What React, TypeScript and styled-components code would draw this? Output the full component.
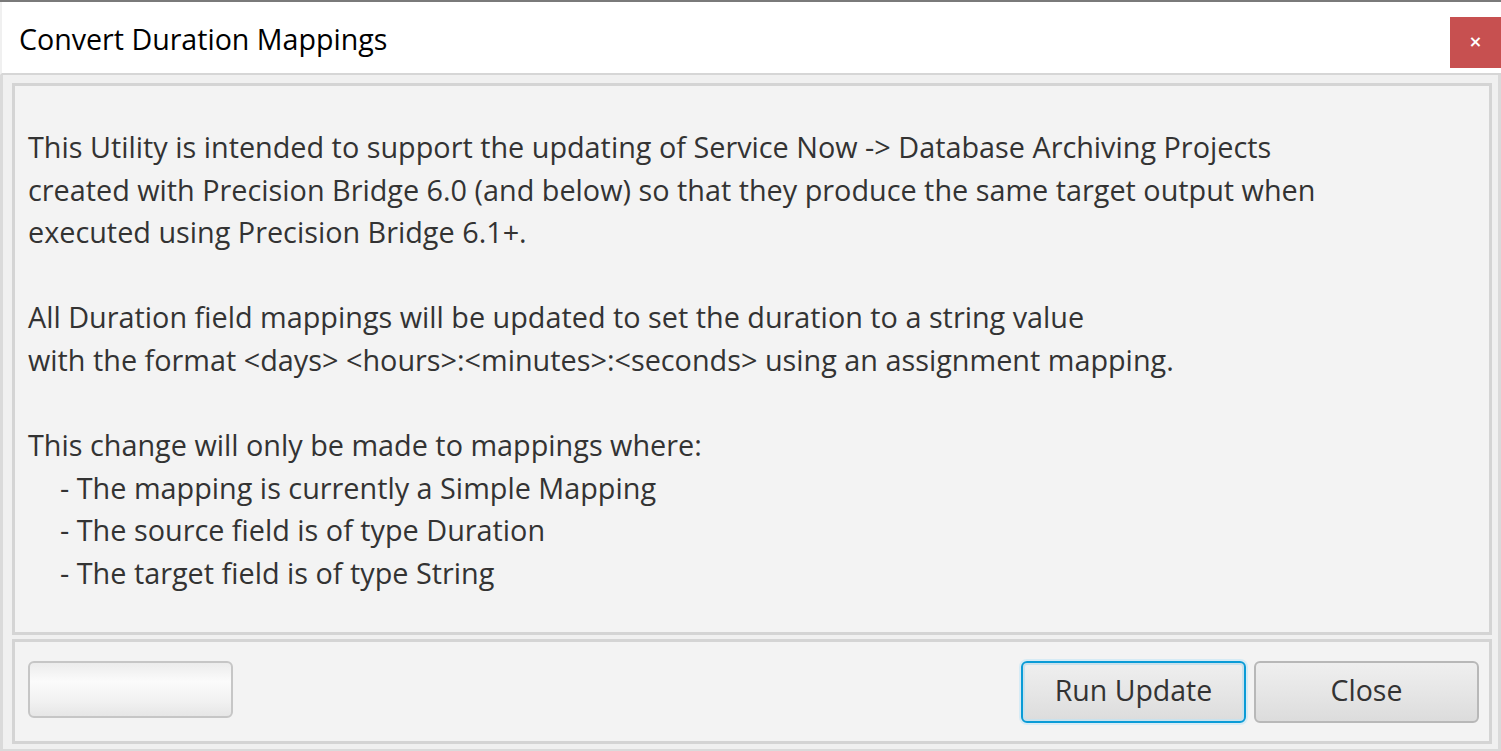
import React from "react";
import styled, { createGlobalStyle } from "styled-components";

const Global = createGlobalStyle`
  html, body { margin: 0; padding: 0; background: #f0f0f0; }
  * { box-sizing: border-box; }
`;

const FONT = `"Open Sans", "Noto Sans", sans-serif`;

const Window = styled.div`
  width: 1501px;
  height: 751px;
  display: flex;
  flex-direction: column;
  border-top: 2px solid #7a7a7a;
  font-family: ${FONT};
  overflow: hidden;
`;

const TitleBar = styled.div`
  height: 73px;
  flex: none;
  background: #ffffff;
  border-bottom: 2px solid #d6d6d6;
  border-left: 2px solid #f0f0f0;
  display: flex;
  justify-content: space-between;
  align-items: flex-start;
`;

const Title = styled.div`
  padding-left: 17px;
  height: 71px;
  display: flex;
  align-items: center;
  font-size: 28.6px;
  color: #000;
  padding-top: 2px;
`;

const CloseX = styled.button`
  margin-top: 15px;
  width: 51px;
  height: 51px;
  border: none;
  background: #c75050;
  color: #fff;
  font-family: "DejaVu Sans", sans-serif;
  font-size: 16px;
  font-weight: bold;
  padding: 0 0 2px 0;
  display: flex;
  align-items: center;
  justify-content: center;
`;

const Body = styled.div`
  flex: 1;
  display: flex;
  flex-direction: column;
  gap: 4px;
  background: #f0f0f0;
  border-left: 3px solid #dadada;
  border-right: 3px solid #dadada;
  border-bottom: 2px solid #dadada;
  padding: 8px 6px 5px 9px;
`;

const Panel = styled.div`
  flex: 1;
  border: 3px solid #d4d4d4;
  background: #f3f3f3;
  padding: 40px 13px 0 13px;
  color: #333333;
  font-size: 28.8px;
  line-height: 42.6px;
`;

const Line = styled.div<{ $indent?: boolean }>`
  white-space: pre;
  padding-left: ${(p) => (p.$indent ? "32px" : "0")};
  min-height: 42.6px;
`;

const Footer = styled.div`
  height: 105px;
  flex: none;
  border: 3px solid #d4d4d4;
  background: #f3f3f3;
  display: flex;
  align-items: center;
  padding: 0 10px 0 13px;
`;

const Spacer = styled.div`
  flex: 1;
`;

const Button = styled.button<{ $focused?: boolean; $blank?: boolean }>`
  font-family: ${FONT};
  font-size: 28.5px;
  color: #333333;
  width: ${(p) => (p.$blank ? "205px" : "225px")};
  height: ${(p) => (p.$blank ? "57px" : "62px")};
  margin-top: ${(p) => (p.$blank ? "-4px" : "0")};
  border-radius: 6px;
  border: ${(p) => (p.$focused ? "2px solid #0a9bd6" : "2px solid #b8b8b8")};
  background: ${(p) =>
    p.$blank
      ? "linear-gradient(#ececec 0%, #fbfbfb 35%, #f2f2f2 70%, #e6e6e6 100%)"
      : "linear-gradient(#efefef 0%, #e6e6e6 50%, #dcdcdc 100%)"};
  box-shadow: ${(p) =>
    p.$focused
      ? "0 0 0 2px #d6ebf5, inset 0 0 0 2px #c9e1ec"
      : "none"};
  ${(p) => (p.$blank ? "border-color: #c6c6c6;" : "")}
  padding: 0 0 3px 0;
`;

const ButtonGroup = styled.div`
  display: flex;
  gap: 8px;
`;

export default function App() {
  return (
    <>
      <Global />
      <Window>
        <TitleBar>
          <Title>Convert Duration Mappings</Title>
          <CloseX>×</CloseX>
        </TitleBar>
        <Body>
          <Panel>
            <Line>This Utility is intended to support the updating of Service Now -&gt; Database Archiving Projects</Line>
            <Line>created with Precision Bridge 6.0 (and below) so that they produce the same target output when</Line>
            <Line>executed using Precision Bridge 6.1+.</Line>
            <Line />
            <Line>All Duration field mappings will be updated to set the duration to a string value</Line>
            <Line>with the format &lt;days&gt; &lt;hours&gt;:&lt;minutes&gt;:&lt;seconds&gt; using an assignment mapping.</Line>
            <Line />
            <Line>This change will only be made to mappings where:</Line>
            <Line $indent>- The mapping is currently a Simple Mapping</Line>
            <Line $indent>- The source field is of type Duration</Line>
            <Line $indent>- The target field is of type String</Line>
          </Panel>
          <Footer>
            <Button $blank />
            <Spacer />
            <ButtonGroup>
              <Button $focused>Run Update</Button>
              <Button>Close</Button>
            </ButtonGroup>
          </Footer>
        </Body>
      </Window>
    </>
  );
}
